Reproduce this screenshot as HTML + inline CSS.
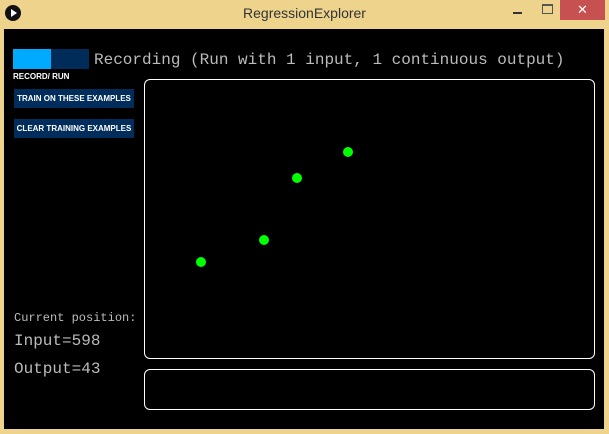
<!DOCTYPE html><html><head><style>
body{margin:0;width:609px;height:434px;background:#edd38c;position:relative;overflow:hidden;font-family:"Liberation Mono","Courier New",monospace}
.a{position:absolute}
.m{font-family:"Liberation Mono","Courier New",Courier,monospace;color:#bbb;white-space:nowrap}
.btn{position:absolute;left:14px;width:120px;height:19px;background:#002d5b;color:#fff;font:bold 8px "Liberation Sans",sans-serif;line-height:19px;text-align:center}
.dot{position:absolute;width:10px;height:10px;border-radius:50%;background:#00ff00}
</style></head><body>
<div class="a" style="left:5px;top:5px;width:16px;height:16px;border-radius:50%;background:#111"></div>
<div class="a" style="left:11px;top:9px;width:0;height:0;border-left:6px solid #fff;border-top:4px solid transparent;border-bottom:4px solid transparent"></div>
<div class="a" style="left:0;top:5px;width:609px;text-align:center;font:14px 'Liberation Sans',sans-serif;color:#333">RegressionExplorer</div>
<div class="a" style="left:513px;top:12px;width:9px;height:2px;background:#333"></div>
<div class="a" style="left:542px;top:4px;width:9px;height:7px;border:1px solid #555;border-top-width:2px"></div>
<div class="a" style="left:560px;top:0;width:45px;height:20px;background:#c75050;color:#fff;font:13px 'Liberation Sans',sans-serif;text-align:center;line-height:20px">✕</div>
<div class="a" style="left:4px;top:29px;width:600px;height:400px;background:#000"></div>
<div class="a" style="left:13px;top:49px;width:38px;height:20px;background:#00aaff"></div>
<div class="a" style="left:51px;top:49px;width:38px;height:20px;background:#002c5a"></div>
<div class="a m" style="left:94px;top:51px;font-size:16px">Recording (Run with 1 input, 1 continuous output)</div>
<div class="a" style="left:13px;top:72px;color:#fff;font:bold 8px 'Liberation Sans',sans-serif">RECORD/ RUN</div>
<div class="btn" style="top:89px">TRAIN ON THESE EXAMPLES</div>
<div class="btn" style="top:119px">CLEAR TRAINING EXAMPLES</div>
<div class="a" style="left:144px;top:79px;width:449px;height:278px;border:1.5px solid #fff;border-radius:6px"></div>
<div class="a" style="left:144px;top:369px;width:449px;height:39px;border:1.5px solid #fff;border-radius:6px"></div>
<div class="dot" style="left:196px;top:257px"></div>
<div class="dot" style="left:259px;top:235px"></div>
<div class="dot" style="left:292px;top:173px"></div>
<div class="dot" style="left:343px;top:147px"></div>
<div class="a m" style="left:14px;top:311px;font-size:12px">Current position:</div>
<div class="a m" style="left:14px;top:332px;font-size:16px">Input=598</div>
<div class="a m" style="left:14px;top:360px;font-size:16px">Output=43</div>
</body></html>
